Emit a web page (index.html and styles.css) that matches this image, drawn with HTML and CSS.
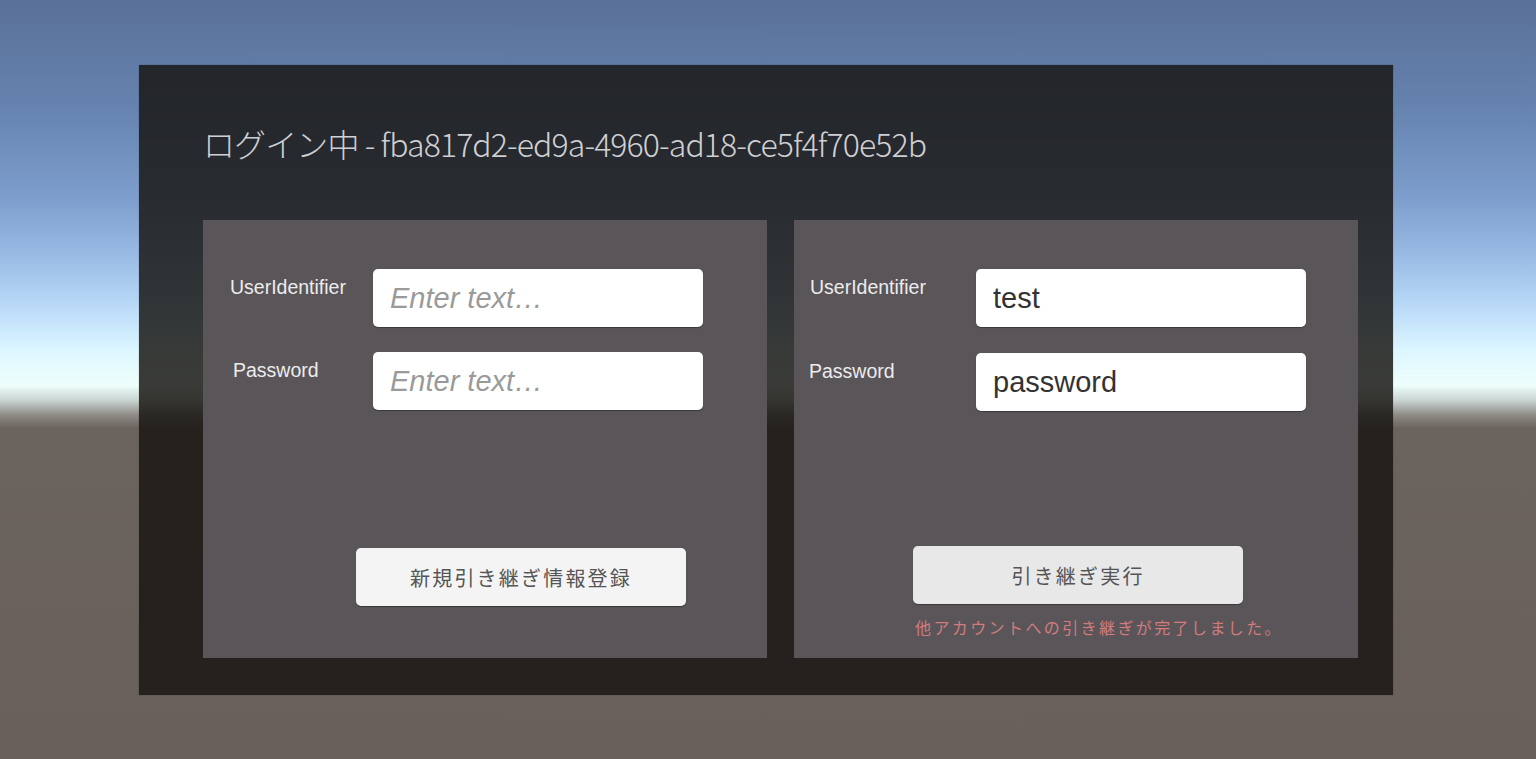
FILE: index.html
```html
<!DOCTYPE html>
<html lang="ja">
<head>
    <meta charset="UTF-8">
    <meta name="viewport" content="width=device-width, initial-scale=1.0">
    <title>引き継ぎ</title>
    <link rel="stylesheet" href="styles.css">
</head>
<body>

    <div class="window">
        <h1 class="title">ログイン中 - fba817d2-ed9a-4960-ad18-ce5f4f70e52b</h1>

        <div class="columns">
            <div class="card card-register">
                <div class="row">
                    <label class="label">UserIdentifier</label>
                    <input class="field" type="text" placeholder="Enter text…">
                </div>
                <div class="row">
                    <label class="label label-pass">Password</label>
                    <input class="field" type="text" placeholder="Enter text…">
                </div>
                <div class="actions">
                    <button class="button button-light">新規引き継ぎ情報登録</button>
                </div>
            </div>

            <div class="card card-transfer">
                <div class="row">
                    <label class="label">UserIdentifier</label>
                    <input class="field" type="text" value="test">
                </div>
                <div class="row row-pass">
                    <label class="label label-pass">Password</label>
                    <input class="field" type="text" value="password">
                </div>
                <div class="actions">
                    <button class="button">引き継ぎ実行</button>
                    <div class="message">他アカウントへの引き継ぎが完了しました。</div>
                </div>
            </div>
        </div>
    </div>

</body>
</html>
```

FILE: styles.css
```css
* {
    box-sizing: border-box;
}

body {
    margin: 0;
    height: 759px;
    overflow: hidden;
    padding: 65px 0 0 139px;
    font-family: "Liberation Sans", Arial, sans-serif;
    background: linear-gradient(to bottom,
        #5a7198 0px,
        #6481ad 100px,
        #7e9ecd 200px,
        #9cbde6 260px,
        #bcdcf9 310px,
        #dcf6ff 350px,
        #eefffc 385px,
        #cad5d2 400px,
        #8e8b87 415px,
        #6b635e 428px,
        #69605b 759px);
}

.window {
    width: 1254px;
    height: 630px;
    padding: 0 35px 0 64px;
    background-color: rgba(24, 21, 18, 0.84);
    box-shadow: 0 0 1px rgba(0, 0, 0, 0.4);
}

.title {
    margin: 0;
    height: 155px;
    padding: 55px 0 0 0;
    font-family: "Noto Sans CJK JP", sans-serif;
    font-weight: 300;
    font-size: 32px;
    color: #cfd0d3;
    letter-spacing: -0.9px;
}

.columns {
    display: flex;
    gap: 27px;
}

.card {
    width: 564px;
    height: 438px;
    display: flex;
    flex-direction: column;
    padding-top: 49px;
    background-color: #5a5559;
}

.card-register {
    padding-left: 27px;
}

.card-transfer {
    padding-left: 16px;
}

.row {
    display: flex;
    align-items: flex-start;
    margin-bottom: 25px;
}

.row-pass {
    margin-top: 1px;
}

.label {
    margin-top: 7px;
    font-size: 19.5px;
    color: #ececec;
}

.card-register .label {
    width: 143px;
}

.card-register .label-pass {
    padding-left: 3px;
}

.card-transfer .label {
    width: 166px;
}

.card-transfer .label-pass {
    margin-left: -1px;
    width: 167px;
}

.field {
    width: 330px;
    height: 58px;
    padding: 0 17px;
    border: none;
    border-radius: 5px;
    background-color: #ffffff;
    box-shadow: 0 1px 1px rgba(0, 0, 0, 0.35);
    font-family: "Liberation Sans", Arial, sans-serif;
    font-size: 29px;
    color: #333333;
    outline: none;
}

.field::placeholder {
    color: #9a9a9a;
    font-style: italic;
}

.actions {
    display: flex;
    flex-direction: column;
    align-items: flex-start;
}

.card-register .actions {
    margin: 113px 0 0 126px;
}

.card-transfer .actions {
    margin: 110px 0 0 103px;
}

.button {
    width: 330px;
    height: 58px;
    border: none;
    border-radius: 5px;
    background-color: #e8e8e8;
    box-shadow: 0 1px 1px rgba(0, 0, 0, 0.35);
    font-family: "Noto Sans CJK JP", sans-serif;
    font-size: 20px;
    letter-spacing: 2.2px;
    color: #555555;
    cursor: pointer;
}

.button-light {
    background-color: #f4f4f4;
}

.message {
    margin: 11px 0 0 2px;
    font-family: "Noto Sans CJK JP", sans-serif;
    font-size: 16px;
    letter-spacing: 2.4px;
    color: #d27c7e;
}
```
